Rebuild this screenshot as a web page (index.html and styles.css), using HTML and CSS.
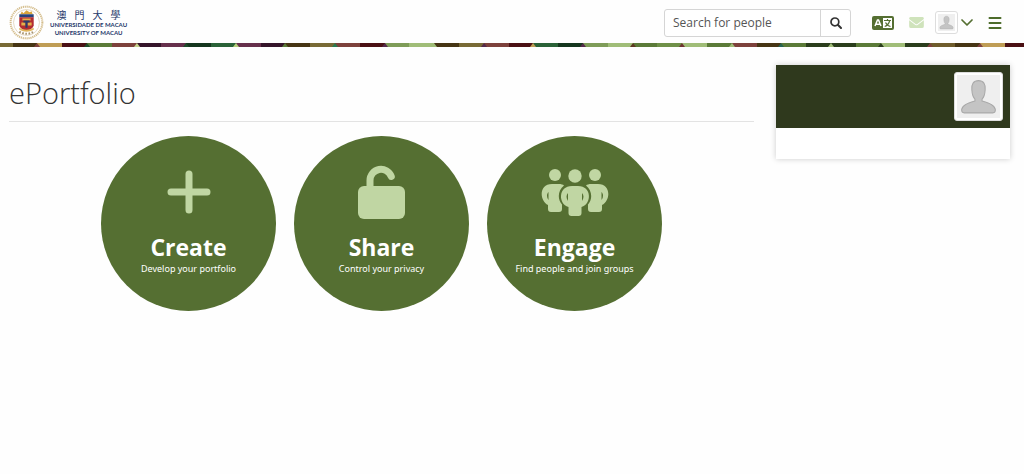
FILE: index.html
```
<!DOCTYPE html>
<html lang="en">
<head>
    <meta charset="UTF-8">
    <meta name="viewport" content="width=device-width, initial-scale=1.0">
    <title>ePortfolio</title>
    <link rel="stylesheet" href="styles.css">
</head>
<body>

<header class="site-header">
    <a class="logo" href="#">
        <svg class="crest" viewBox="0 0 34 34" aria-hidden="true">
            <circle cx="17" cy="17" r="15.4" fill="#fff" stroke="#d4bd8c" stroke-width="2" stroke-dasharray="1.2 .7"/>
            <circle cx="17" cy="17" r="12.6" fill="none" stroke="#d9cbb0" stroke-width=".7"/>
            <path d="M10 26q7 4 14 0" fill="none" stroke="#a89572" stroke-width="2" stroke-dasharray="1.6 1.5"/>
            <path d="M11 9l1.500-3 1.500 2 3-3 3 2 2-1 1 3z" fill="#d9a53d"/>
            <path d="M10 9h14v3H10z" fill="#27447c"/>
            <path d="M10 12h14v8q-1 4-7 5-6-1-7-5z" fill="#b32c31"/>
            <path d="M13 13h8v2h-8zM12 17h4v3h-4zM18 17h4v3h-4z" fill="#e3b04a"/>
            <path d="M14 15h6v2h-6zM16 17h2v5h-2z" fill="#293d6d"/>
            <path d="M10 22q7 4 14 0v2q-7 4-14 0z" fill="#e0b45b"/>
        </svg>
        <span class="logo-text">
            <span class="logo-chinese" lang="zh-Hant"><span>澳</span><span>門</span><span>大</span><span>學</span></span>
            <span>UNIVERSIDADE DE MACAU</span>
            <span>UNIVERSITY OF MACAU</span>
        </span>
    </a>

    <form class="search">
        <input type="search" placeholder="Search for people" aria-label="Search for people">
        <button type="button" aria-label="Search">
            <svg viewBox="0 0 12 12"><circle cx="4.900" cy="4.900" r="3.900" fill="none" stroke="#333" stroke-width="1.700"/><path d="M7.800 7.800l3.200 3.200" stroke="#333" stroke-width="2" stroke-linecap="round"/></svg>
        </button>
    </form>

    <nav class="tools">
        <button class="tool language" aria-label="Language">
            <svg viewBox="0 0 22 14">
                <rect width="22" height="14" rx="2" fill="#556f32"/>
                <path d="M3 10l2.500-6h1L9 10M4 8.200h4" fill="none" stroke="#fff" stroke-width="1.500"/>
                <rect x="11" y="2" width="9" height="10" fill="#fff"/>
                <path d="M12 4.500h7M15.500 3v1.500M17.700 4.500q-1 4.500-5 6M13.500 6.500q2 3.500 5 4" fill="none" stroke="#556f32" stroke-width="1.200"/>
            </svg>
        </button>
        <button class="tool inbox" aria-label="Inbox">
            <svg viewBox="0 0 512 384"><path fill="#cfe3bb" d="M48 0h416a48 48 0 0 1 29 86L275 250a32 32 0 0 1-38 0L19 86A48 48 0 0 1 48 0zM0 112v208a64 64 0 0 0 64 64h384a64 64 0 0 0 64-64V112L294 275a64 64 0 0 1-76 0z"/></svg>
        </button>
        <button class="tool account" aria-label="Account menu">
            <span class="avatar avatar-small">
                <svg viewBox="0 0 42 42"><path d="M21 5.500c5 0 7 3.500 6.500 9-.3 5-1.500 7.500-3 9v2c8 2.500 12.500 4 13 8.500 0 2-.8 3-2.500 3H7C5.300 37 4.500 36 4.500 34c.5-4.500 5-6 13-8.500v-2c-1.500-1.500-2.700-4-3-9C14 9 16 5.500 21 5.500z" fill="#c4c4c4" stroke="#a9a9a9"/></svg>
            </span>
            <svg class="chevron" viewBox="0 0 12 7"><path d="M1 1l5 5 5-5" fill="none" stroke="#556f32" stroke-width="1.700" stroke-linecap="round" stroke-linejoin="round"/></svg>
        </button>
        <button class="tool menu" aria-label="Menu">
            <svg viewBox="0 0 13 12"><path d="M1 1h11M1 6h11M1 11h11" stroke="#4d6c2b" stroke-width="2" stroke-linecap="round"/></svg>
        </button>
    </nav>
</header>

<svg class="ribbon" id="ribbon" viewBox="0 0 1024 4" preserveAspectRatio="none" aria-hidden="true"></svg>

<div class="page">
    <main class="content">
        <h1>ePortfolio</h1>
        <div class="circles">
            <a class="circle" href="#">
                <svg class="icon" viewBox="0 0 70 54"><path d="M35 9v36M17 27h36" stroke="#c0d6a3" stroke-width="7" stroke-linecap="round"/></svg>
                <strong>Create</strong>
                <span>Develop your portfolio</span>
            </a>
            <a class="circle" href="#">
                <svg class="icon" viewBox="0 0 70 54"><rect x="11" y="21" width="47" height="33" rx="6" fill="#c0d6a3"/><path d="M23 24v-8.500a11 11 0 0 1 21.300-4" fill="none" stroke="#c0d6a3" stroke-width="7" stroke-linecap="round"/></svg>
                <strong>Share</strong>
                <span>Control your privacy</span>
            </a>
            <a class="circle" href="#">
                <svg class="icon" viewBox="0 0 70 54">
                    <g id="person-side" fill="#c0d6a3">
                        <circle cx="15" cy="10" r="6"/>
                        <path fill-rule="evenodd" d="M12 19h7c2 0 4 .5 5 1.500-6 5-7 13-2 19V44q0 3-3 3h-8q-3 0-3-3v-4C-1 35-1 19 12 19zM8.500 27c-2 2-2 5 0 8z"/>
                    </g>
                    <use href="#person-side" transform="matrix(-1 0 0 1 70 0)"/>
                    <g fill="#c0d6a3">
                        <circle cx="35" cy="11" r="6.700"/>
                        <path fill-rule="evenodd" d="M32 21h6c14 0 14 18 3.500 21v6q0 3-3 3h-7q-3 0-3-3v-6C18 39 18 21 32 21zM28 28c-2 2-2 5 0 8zM42 28v8c2-3 2-6 0-8z"/>
                    </g>
                </svg>
                <strong>Engage</strong>
                <span>Find people and join groups</span>
            </a>
        </div>
    </main>

    <aside class="profile">
        <div class="profile-top">
            <a class="avatar" href="#" aria-label="Profile">
                <svg viewBox="0 0 42 42"><path d="M21 5.500c5 0 7 3.500 6.500 9-.3 5-1.500 7.500-3 9v2c8 2.500 12.500 4 13 8.500 0 2-.8 3-2.500 3H7C5.300 37 4.500 36 4.500 34c.5-4.500 5-6 13-8.500v-2c-1.500-1.500-2.700-4-3-9C14 9 16 5.500 21 5.500z" fill="#c4c4c4" stroke="#a9a9a9"/></svg>
            </a>
        </div>
        <div class="profile-body"></div>
    </aside>
</div>

<script src="ribbon.js"></script>
</body>
</html>
```
FILE: styles.css
```
* {
    box-sizing: border-box;
}
body {
    margin: 0;
    font-family: "Open Sans", sans-serif;
    font-size: 12px;
    color: #333;
    background-color: #fefefe;
}
a {
    color: inherit;
    text-decoration: none;
}
button {
    padding: 0;
    border: none;
    background: none;
    cursor: pointer;
}
svg {
    display: block;
}
.site-header {
    display: flex;
    align-items: center;
    height: 43px;
    padding: 2px 22px 0 9px;
}
.logo {
    display: flex;
    align-items: center;
    gap: 6px;
    margin-right: auto;
}
.crest {
    width: 35px;
    height: 35px;
}
.logo-text {
    display: flex;
    flex-direction: column;
    align-items: center;
    font-family: Lato, sans-serif;
    font-size: 6px;
    font-weight: bold;
    line-height: 8px;
    color: #25386a;
}
.logo-chinese {
    display: flex;
    gap: 8px;
    font-family: "Noto Sans CJK TC", sans-serif;
    font-size: 10px;
    font-weight: normal;
    line-height: 12px;
}
.search {
    display: flex;
    width: 187px;
    height: 28px;
    border: 1px solid #d5d5d5;
    border-radius: 3px;
    background-color: #fff;
}
.search input {
    flex: 1;
    min-width: 0;
    padding: 0 8px;
    border: none;
    background: none;
    font: inherit;
}
.search input::placeholder {
    color: #555;
    opacity: 1;
}
.search button {
    display: flex;
    align-items: center;
    justify-content: center;
    width: 30px;
    border-left: 1px solid #d5d5d5;
}
.search button svg {
    width: 12px;
    height: 12px;
}
.tools {
    display: flex;
    align-items: center;
    margin-left: 21px;
}
.language svg {
    width: 22px;
    height: 14px;
}
.inbox {
    margin-left: 15px;
}
.inbox svg {
    width: 15px;
    height: 11px;
}
.account {
    display: flex;
    align-items: center;
    gap: 3px;
    margin-left: 11px;
}
.chevron {
    width: 12px;
    height: 7px;
}
.menu {
    margin-left: 15px;
}
.menu svg {
    width: 14px;
    height: 12px;
}
.avatar {
    display: block;
    width: 49px;
    height: 49px;
    padding: 2px;
    border: 1px solid #ddd;
    border-radius: 3px;
    background-color: #fff;
}
.avatar svg {
    width: 100%;
    height: 100%;
    background-color: #efefef;
}
.avatar-small {
    width: 23px;
    height: 23px;
}
.ribbon {
    width: 100%;
    height: 4px;
}
.page {
    display: flex;
    align-items: flex-start;
    gap: 22px;
    padding: 18px 14px 0 9px;
}
.content {
    flex: 1;
}
h1 {
    margin: 0 0 14px;
    padding: 8px 0;
    border-bottom: 1px solid #e3e3e3;
    font-size: 29px;
    font-weight: 300;
    line-height: 40px;
}
.circles {
    display: flex;
    justify-content: center;
    gap: 18px;
}
.circle {
    display: flex;
    flex-direction: column;
    align-items: center;
    width: 175px;
    height: 175px;
    padding-top: 29px;
    border-radius: 50%;
    background-color: #556f32;
    color: #fff;
}
.icon {
    width: 70px;
    height: 54px;
}
.circle strong {
    margin-top: 14px;
    font-size: 23px;
    line-height: 28px;
}
.circle span {
    font-family: "Noto Sans", sans-serif;
    font-size: 9px;
    line-height: 16px;
}
.profile {
    width: 234px;
    background-color: #fff;
    box-shadow: 0 0 6px rgba(0, 0, 0, 0.2);
}
.profile-top {
    display: flex;
    justify-content: flex-end;
    padding: 7px;
    background-color: #2f391d;
}
.profile-body {
    height: 31px;
}
```
FILE: ribbon.js
```
const ribbon = document.getElementById('ribbon');
const step = 24.8;

const bands = [
    '#786a35', '#463514', '#bf9d55', '#4a1014', '#5b7a38', '#7d413c', '#35152a', '#66304c',
    '#15361e', '#2a6238', '#66304c', '#35152a', '#463514', '#786a35', '#7d413c', '#4a1014',
    '#7e9c58', '#a0bd78', '#463514', '#786a35', '#7d413c', '#4a1014', '#2a6238', '#15361e',
    '#7e9c58', '#a0bd78', '#5b7a38', '#6f9048', '#a0bd78', '#5b7a38', '#7d413c', '#463514',
    '#5b7a38', '#2a3d1c', '#2a3d1c', '#5b7a38', '#a0bd78', '#2a3d1c', '#6f5c2c', '#463514',
    '#bf9d55', '#4a1014'
];
// one small peak on every second seam
const peaks = [
    '#7d413c', '#1f4a2a', '#c5d38c', '#1f4a2a', '#b5cf7b', '#5b7a38', '#2a7a50', '#54294a',
    '#a0bd78', '#54294a', '#bf9d55', '#54294a', '#5d3720', '#6f3430', '#a0bd78', '#256450',
    '#a0bd78', '#2a3d1c', '#7d413c', '#7d413c'
];

function addShape(points, fill) {
    const shape = document.createElementNS('http://www.w3.org/2000/svg', 'polygon');
    shape.setAttribute('points', points);
    shape.setAttribute('fill', fill);
    ribbon.appendChild(shape);
}

bands.forEach((color, i) => {
    const left = Math.round(12.5 + (i - 1) * step);
    const right = i === bands.length - 1 ? 1024 : Math.round(12.5 + i * step);
    addShape(`${left},0 ${right},0 ${right},4 ${left},4`, color);
});

peaks.forEach((color, i) => {
    const x = Math.round(12.5 + (i * 2 + 1) * step);
    addShape(`${x - 3},4 ${x},0 ${x + 3},4`, color);
});
```
